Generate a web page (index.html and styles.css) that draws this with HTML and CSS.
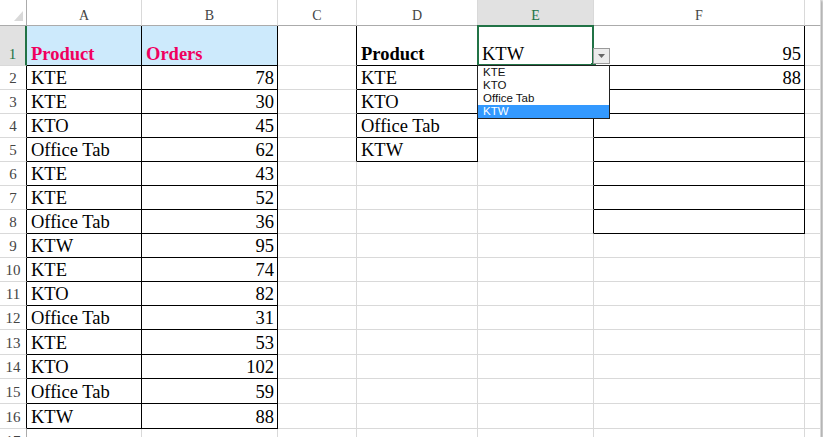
FILE: index.html
```html
<!doctype html>
<html>
<head>
<meta charset="UTF-8">
<title>Product orders</title>
<link rel="stylesheet" href="styles.css">
</head>
<body>
<div class="sheet">
	<div class="corner"><svg width="9" height="10" viewBox="0 0 9 10"><polygon points="9,0 9,10 0,10" fill="#d9d9d9"/></svg></div>
	<div class="ch">A</div><div class="ch">B</div><div class="ch">C</div><div class="ch">D</div><div class="ch on">E</div><div class="ch">F</div><div class="ch"></div>

	<div class="rh on">1</div>
	<div class="c fill hd br bb">Product</div>
	<div class="c fill hd br bb">Orders</div>
	<div class="c br"></div>
	<div class="c b br bb">Product</div>
	<div class="c cur br">KTW
		<div class="handle"></div>
		<div class="sel"></div>
		<div class="ddbtn"><svg width="7" height="4" viewBox="0 0 7 4"><polygon points="0,0 7,0 3.5,4" fill="#666"/></svg></div>
		<ul class="ddlist">
			<li>KTE</li>
			<li>KTO</li>
			<li>Office Tab</li>
			<li class="picked">KTW</li>
		</ul>
	</div>
	<div class="c n br bb">95</div>
	<div class="c"></div>

	<div class="rh br">2</div><div class="c br bb">KTE</div><div class="c n br bb">78</div><div class="c br"></div><div class="c br bb">KTE</div><div class="c br"></div><div class="c n br bb">88</div><div class="c"></div>
	<div class="rh br">3</div><div class="c br bb">KTE</div><div class="c n br bb">30</div><div class="c br"></div><div class="c br bb">KTO</div><div class="c br"></div><div class="c br bb"></div><div class="c"></div>
	<div class="rh br">4</div><div class="c br bb">KTO</div><div class="c n br bb">45</div><div class="c br"></div><div class="c br bb">Office Tab</div><div class="c br"></div><div class="c br bb"></div><div class="c"></div>
	<div class="rh br">5</div><div class="c br bb">Office Tab</div><div class="c n br bb">62</div><div class="c br"></div><div class="c br bb">KTW</div><div class="c br"></div><div class="c br bb"></div><div class="c"></div>
	<div class="rh br">6</div><div class="c br bb">KTE</div><div class="c n br bb">43</div><div class="c"></div><div class="c"></div><div class="c br"></div><div class="c br bb"></div><div class="c"></div>
	<div class="rh br">7</div><div class="c br bb">KTE</div><div class="c n br bb">52</div><div class="c"></div><div class="c"></div><div class="c br"></div><div class="c br bb"></div><div class="c"></div>
	<div class="rh br">8</div><div class="c br bb">Office Tab</div><div class="c n br bb">36</div><div class="c"></div><div class="c"></div><div class="c br"></div><div class="c br bb"></div><div class="c"></div>
	<div class="rh br">9</div><div class="c br bb">KTW</div><div class="c n br bb">95</div><div class="c"></div><div class="c"></div><div class="c"></div><div class="c"></div><div class="c"></div>
	<div class="rh br">10</div><div class="c br bb">KTE</div><div class="c n br bb">74</div><div class="c"></div><div class="c"></div><div class="c"></div><div class="c"></div><div class="c"></div>
	<div class="rh br">11</div><div class="c br bb">KTO</div><div class="c n br bb">82</div><div class="c"></div><div class="c"></div><div class="c"></div><div class="c"></div><div class="c"></div>
	<div class="rh br">12</div><div class="c br bb">Office Tab</div><div class="c n br bb">31</div><div class="c"></div><div class="c"></div><div class="c"></div><div class="c"></div><div class="c"></div>
	<div class="rh br">13</div><div class="c br bb">KTE</div><div class="c n br bb">53</div><div class="c"></div><div class="c"></div><div class="c"></div><div class="c"></div><div class="c"></div>
	<div class="rh br">14</div><div class="c br bb">KTO</div><div class="c n br bb">102</div><div class="c"></div><div class="c"></div><div class="c"></div><div class="c"></div><div class="c"></div>
	<div class="rh br">15</div><div class="c br bb">Office Tab</div><div class="c n br bb">59</div><div class="c"></div><div class="c"></div><div class="c"></div><div class="c"></div><div class="c"></div>
	<div class="rh br">16</div><div class="c br bb">KTW</div><div class="c n br bb">88</div><div class="c"></div><div class="c"></div><div class="c"></div><div class="c"></div><div class="c"></div>
	<div class="rh">17</div><div class="c"></div><div class="c"></div><div class="c"></div><div class="c"></div><div class="c"></div><div class="c"></div><div class="c"></div>
</div>
</body>
</html>
```

FILE: styles.css
```css
body{margin:0;background:#fff;}
.sheet{width:821px;height:437px;overflow:hidden;display:grid;grid-template-columns:27px 115px 136px 79px 121px 116px 211px 16px;grid-template-rows:26px 40px repeat(11,24px) 25px 24px 25px 25px 24px;box-shadow:1px 1px 3px 1px rgba(0,0,0,.35);background:#fff;}
.sheet > div{box-sizing:border-box;}

/* headers */
.corner{border-right:1px solid #ababab;border-bottom:1px solid #ababab;display:flex;align-items:flex-end;justify-content:flex-end;padding:0 3px 4px 0;}
.ch{border-right:1px solid #d9d9d9;border-bottom:1px solid #ababab;display:flex;align-items:flex-end;justify-content:center;padding-bottom:2px;font:14px/14px "Liberation Serif",serif;color:#444;}
.ch.on{background:#e1e1e1;color:#217346;}
.rh{border-right:1px solid #ababab;border-bottom:1px solid #d9d9d9;display:flex;align-items:flex-end;justify-content:center;padding-bottom:3px;font:15px/15px "Liberation Serif",serif;color:#444;}
.rh.br{border-right-color:#000;}
.rh.on{background:#e1e1e1;color:#217346;border-right:2px solid #217346;}

/* cells */
.c{border-right:1px solid #d9d9d9;border-bottom:1px solid #d9d9d9;display:flex;align-items:flex-end;padding:0 3px 2px 4px;font:18.5px/18px "Liberation Serif",serif;color:#000;white-space:nowrap;}
.n{justify-content:flex-end;}
.br{border-right-color:#000;}
.bb{border-bottom-color:#000;}
.fill{background:#cdeafc;}
.hd{color:#f0005e;font-weight:bold;}
.b{font-weight:bold;}

/* active cell with validation list */
.cur{position:relative;}
.sel{position:absolute;left:-1px;top:-1px;width:117px;height:41px;box-sizing:border-box;border:2px solid #217346;}
.handle{position:absolute;left:112px;top:36px;width:5px;height:5px;background:#217346;border:1px solid #fff;}
.ddbtn{position:absolute;left:115px;top:22px;width:17px;height:16px;box-sizing:border-box;border:1px solid #9a9a9a;background:#ececec;display:flex;align-items:center;justify-content:center;}
.ddlist{position:absolute;left:-1px;top:39px;width:133px;margin:0;padding:0;list-style:none;box-sizing:border-box;border:1px solid #222;background:#fff;font:11.5px/13px "Liberation Sans",sans-serif;color:#111;}
.ddlist li{height:13px;padding-left:5px;}
.ddlist .picked{background:#3399ff;color:#fff;}
```
